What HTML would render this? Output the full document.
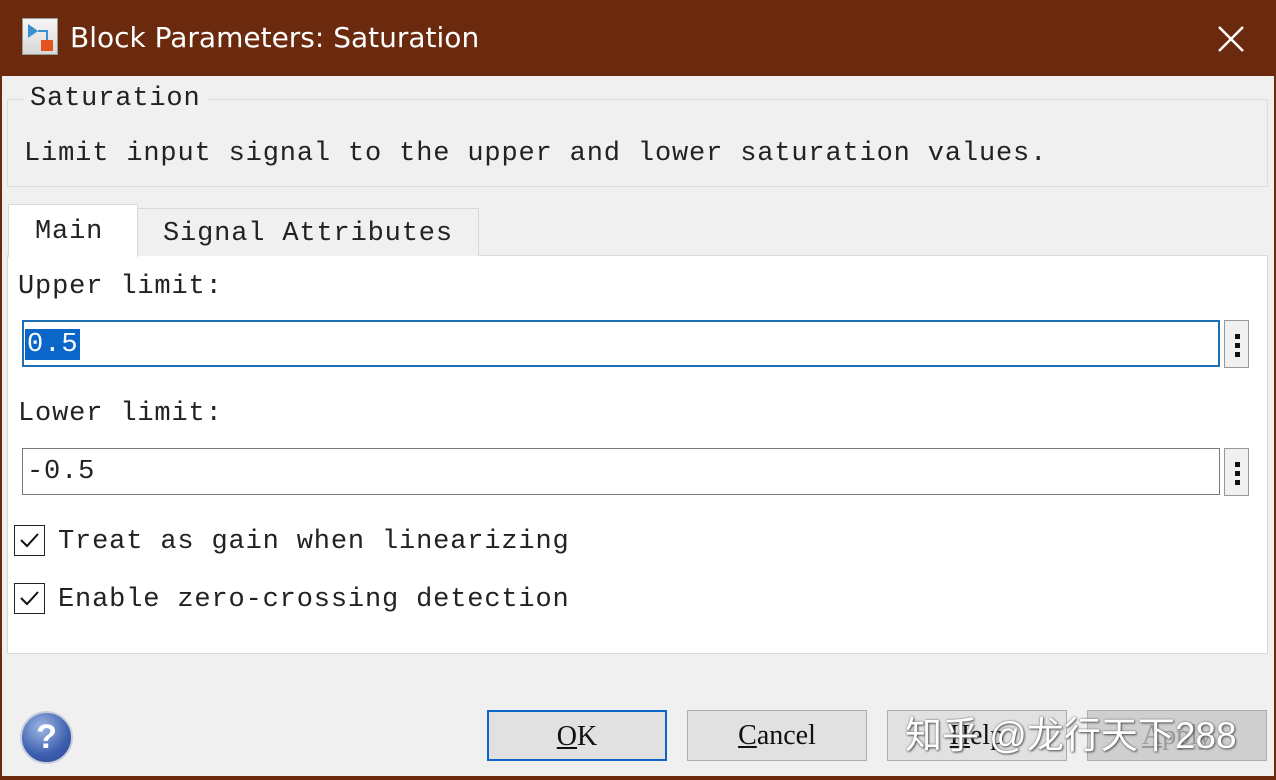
<!DOCTYPE html>
<html><head><meta charset="utf-8"><style>
*{margin:0;padding:0;box-sizing:border-box}
body{width:1276px;height:780px;overflow:hidden;background:#6b2a0d;position:relative;font-family:"Liberation Mono","Noto Sans CJK SC",monospace}
.a{position:absolute}
.m{font-family:"Liberation Mono",monospace;font-size:27px;letter-spacing:0.85px;color:#222;white-space:nowrap;line-height:30px}
.btn{position:absolute;top:710px;width:180px;height:51px;background:#e1e1e1;border:1px solid #adadad;font-family:"Liberation Serif",serif;font-size:28px;text-align:center;line-height:49px;color:#111}
.dots{position:absolute;width:25px;height:48px;background:#f0f0f0;border:1px solid #999}
.dots i{position:absolute;left:10px;width:5px;height:5px;background:#111}
.cb{position:absolute;left:14px;width:31px;height:31px;border:1.5px solid #222;background:#fff}
</style></head><body>
<div class="a" style="left:0;top:0;width:1276px;height:76px;background:#6b2a0d"></div>
<div class="a" style="left:22px;top:18px;width:36px;height:37px;background:linear-gradient(#f6f6f6,#d8d8d8);border:1px solid #999">
<svg width="36" height="37"><path d="M5 5 L15 12 L5 19 Z" fill="#3a8fd0"/><path d="M15 12 H24 V22" stroke="#3a8fd0" stroke-width="2" fill="none"/><rect x="18" y="21" width="12" height="11" fill="#e2531f"/></svg></div>
<div class="a" style="left:70px;top:18px;font-family:'DejaVu Sans','Liberation Sans',sans-serif;font-size:28px;color:#fff;line-height:40px">Block Parameters: Saturation</div>
<svg class="a" style="left:1216px;top:24px" width="30" height="30"><path d="M3 3L27 27M27 3L3 27" stroke="#fff" stroke-width="2.5"/></svg>
<div class="a" style="left:2px;top:76px;width:1272px;height:700px;background:#f0f0f0"></div>
<div class="a" style="left:7px;top:99px;width:1261px;height:88px;border:1px solid #dcdcdc"></div>
<div class="a m" style="left:24px;top:84px;background:#f0f0f0;padding:0 6px">Saturation</div>
<div class="a m" style="left:24px;top:139px">Limit input signal to the upper and lower saturation values.</div>
<div class="a" style="left:7px;top:255px;width:1261px;height:399px;background:#fff;border:1px solid #d9d9d9"></div>
<div class="a" style="left:137px;top:208px;width:342px;height:48px;background:#f0f0f0;border:1px solid #d9d9d9;border-bottom:none"></div>
<div class="a m" style="left:163px;top:219px">Signal Attributes</div>
<div class="a" style="left:8px;top:204px;width:130px;height:53px;background:#fff;border:1px solid #d9d9d9;border-bottom:none"></div>
<div class="a m" style="left:35px;top:217px">Main</div>
<div class="a m" style="left:18px;top:272px">Upper limit:</div>
<div class="a" style="left:22px;top:320px;width:1198px;height:47px;border:2px solid #1f6fb4;background:#fff"></div>
<div class="a" style="left:25px;top:329px;width:55px;height:31px;background:#0a66c8"></div>
<div class="a m" style="left:27px;top:330px;color:#fff;letter-spacing:1px">0.5</div>
<div class="dots" style="left:1224px;top:320px"><i style="top:13px"></i><i style="top:22px"></i><i style="top:31px"></i></div>
<div class="a m" style="left:18px;top:399px">Lower limit:</div>
<div class="a" style="left:22px;top:448px;width:1198px;height:47px;border:1px solid #7a7a7a;background:#fff"></div>
<div class="a m" style="left:27px;top:457px">-0.5</div>
<div class="dots" style="left:1224px;top:448px"><i style="top:13px"></i><i style="top:22px"></i><i style="top:31px"></i></div>
<div class="cb" style="top:525px"><svg width="28" height="28"><path d="M6 14 L12 20 L23 8" stroke="#111" stroke-width="2" fill="none"/></svg></div>
<div class="a m" style="left:58px;top:527px">Treat as gain when linearizing</div>
<div class="cb" style="top:583px"><svg width="28" height="28"><path d="M6 14 L12 20 L23 8" stroke="#111" stroke-width="2" fill="none"/></svg></div>
<div class="a m" style="left:58px;top:585px">Enable zero-crossing detection</div>
<div class="a" style="left:20px;top:711px;width:53px;height:53px;border-radius:50%;background:radial-gradient(circle at 40% 30%,#9fb8e6,#3d5fae 60%,#2a4690);border:2px solid #c9cfdc;color:#fff;font:bold 34px 'Liberation Sans',sans-serif;text-align:center;line-height:49px">?</div>
<div class="btn" style="left:487px;border:2px solid #0a66c8"><u>O</u>K</div>
<div class="btn" style="left:687px"><u>C</u>ancel</div>
<div class="btn" style="left:887px"><u>H</u>elp</div>
<div class="btn" style="left:1087px;color:#9a9a9a;background:#cfcfcf"><u>A</u>pply</div>
<div class="a" style="left:905px;top:705px;font-family:'Liberation Sans','Noto Sans CJK SC',sans-serif;font-size:37px;color:#fff;text-shadow:1px 1px 2px #555,0 0 2px #777;white-space:nowrap">知乎 @龙行天下288</div>
</body></html>
